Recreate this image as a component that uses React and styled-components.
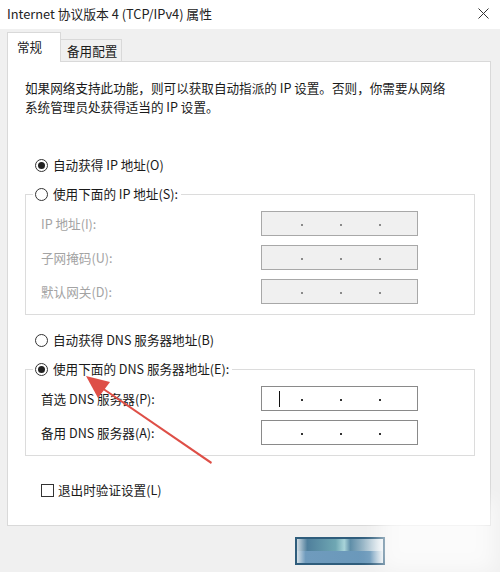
import React from "react";
import styled, { createGlobalStyle } from "styled-components";

const Global = createGlobalStyle`
  html, body { margin: 0; padding: 0; }
  body {
    background: #f0f0f0;
    font-family: "Noto Sans CJK SC", "Noto Sans", sans-serif;
    color: #1a1a1a;
    width: 500px;
    height: 572px;
    overflow: hidden;
  }
`;

const Window = styled.div`
  position: relative;
  width: 500px;
  height: 572px;
  background: #f0f0f0;
`;

const TitleBar = styled.div`
  height: 29px;
  background: #ffffff;
  display: flex;
  align-items: center;
  justify-content: space-between;
  padding: 0 11px 2px 7px;
  box-sizing: border-box;
  font-size: 12.8px;
  color: #222;
`;

const Body = styled.div`
  padding: 0 9px 0 7px;
`;

const TabRow = styled.div`
  display: flex;
  align-items: flex-end;
  height: 30px;
  margin-top: 3px;
  margin-bottom: -1px;
  position: relative;
  z-index: 1;
`;

const Tab = styled.div`
  box-sizing: border-box;
  height: ${(p) => (p.$active ? 30 : 23)}px;
  width: ${(p) => (p.$active ? 54 : 61)}px;
  padding-left: ${(p) => (p.$active ? 9 : 6)}px;
  padding-bottom: ${(p) => (p.$active ? 2 : 0)}px;
  display: flex;
  align-items: center;
  background: ${(p) => (p.$active ? "#ffffff" : "#f0f0f0")};
  border: 1px solid #d9d9d9;
  border-bottom: ${(p) => (p.$active ? "none" : "1px solid #d9d9d9")};
  ${(p) => (p.$active ? "" : "border-left: none;")}
  font-size: 12.6px;
  line-height: 19px;
`;

const Panel = styled.div`
  box-sizing: border-box;
  height: 465px;
  background: #ffffff;
  border: 1px solid #d9d9d9;
  padding-top: 16px;
  font-size: 12.6px;
`;

const Desc = styled.p`
  margin: 0 0 0 17px;
  line-height: 19px;
  width: 424px;
`;

const OptionRow = styled.label`
  display: flex;
  align-items: center;
  height: 20px;
  margin: ${(p) => p.$mt || 0}px 0 0 ${(p) => p.$ml || 27}px;
  gap: ${(p) => p.$gap || 5}px;
  line-height: 20px;
`;

const Radio = styled.span`
  box-sizing: border-box;
  width: 13px;
  height: 13px;
  border-radius: 50%;
  border: 1px solid #333;
  background: #fff;
  display: flex;
  align-items: center;
  justify-content: center;
  &::after {
    content: "";
    width: 7px;
    height: 7px;
    border-radius: 50%;
    background: ${(p) => (p.$checked ? "#222" : "transparent")};
  }
`;

const Check = styled.span`
  box-sizing: border-box;
  width: 13px;
  height: 13px;
  border: 1px solid #333;
  background: #fff;
`;

const Group = styled.fieldset`
  box-sizing: border-box;
  margin: 9px 15px 0 17px;
  padding: 7px 0 10px 15px;
  border: 1px solid #dcdcdc;
  min-width: 0;
`;

const Legend = styled.legend`
  padding: 0 3px 0 2px;
  margin-left: -8px;
  height: 20px;
  display: flex;
  align-items: center;
  gap: 5px;
  line-height: 20px;
`;

const Fields = styled.div`
  display: grid;
  grid-template-columns: 220px 157px;
  row-gap: 9px;
  align-items: center;
`;

const FieldLabel = styled.span`
  color: ${(p) => (p.$disabled ? "#a3a3a3" : "#1a1a1a")};
`;

const IpBox = styled.div`
  box-sizing: border-box;
  height: 25px;
  border: 1px solid ${(p) => (p.$disabled ? "#a8a8a8" : "#8a8a8a")};
  background: ${(p) => (p.$disabled ? "#f0f0f0" : "#ffffff")};
  display: flex;
  align-items: center;
  padding-left: 3px;
`;

const Octet = styled.span`
  width: 35px;
  height: 100%;
  display: flex;
  align-items: center;
  padding-left: ${(p) => (p.$caret ? 14 : 17)}px;
  box-sizing: border-box;
`;

const Dot = styled.span`
  width: 4px;
  display: flex;
  justify-content: center;
  &::after {
    content: "";
    width: 2px;
    height: 2px;
    margin-top: 2px;
    background: ${(p) => (p.$disabled ? "#8a8a8a" : "#333")};
  }
`;

const Caret = styled.span`
  width: 1px;
  height: 16px;
  background: #111;
`;

const Footer = styled.div`
  display: flex;
  justify-content: flex-end;
  padding-right: 106px;
  margin-top: 11px;
`;

const OkButton = styled.div`
  box-sizing: border-box;
  width: 90px;
  height: 28px;
  border: 2px solid #2f5d7c;
  background:
    linear-gradient(90deg, #cfdbe3 0%, #4f7f9c 12%, #6fa7b3 45%, #a9d4d9 55%, #5f8ea8 62%, #e8eef2 98%) top / 100% 50% no-repeat,
    linear-gradient(90deg, #d6e1e8 0%, #6f9bbd 10%, #6a98ba 85%, #e6ecf0 100%) bottom / 100% 50% no-repeat;
  filter: blur(0.6px);
`;

const Smudge = styled.div`
  position: absolute;
  left: 380px;
  top: 500px;
  width: 115px;
  height: 72px;
  background: rgba(255, 255, 255, 0.7);
  filter: blur(10px);
  pointer-events: none;
`;

const ArrowLayer = styled.svg`
  position: absolute;
  left: 0;
  top: 0;
  width: 500px;
  height: 572px;
  pointer-events: none;
`;

function IpField({ disabled, caret }) {
  return (
    <IpBox $disabled={disabled}>
      <Octet $caret={caret}>{caret && <Caret />}</Octet>
      <Dot $disabled={disabled} />
      <Octet />
      <Dot $disabled={disabled} />
      <Octet />
      <Dot $disabled={disabled} />
      <Octet />
    </IpBox>
  );
}

export default function App() {
  return (
    <Window>
      <Global />
      <TitleBar>
        <span>Internet 协议版本 4 (TCP/IPv4) 属性</span>
        <svg width="11" height="11" viewBox="0 0 11 11">
          <path d="M0.5 0.5 L10.5 10.5 M10.5 0.5 L0.5 10.5" stroke="#333" strokeWidth="1" fill="none" />
        </svg>
      </TitleBar>
      <Body>
        <TabRow>
          <Tab $active>常规</Tab>
          <Tab>备用配置</Tab>
        </TabRow>
        <Panel>
          <Desc>
            如果网络支持此功能，则可以获取自动指派的 IP 设置。否则，你需要从网络系统管理员处获得适当的 IP 设置。
          </Desc>
          <OptionRow $mt={39}>
            <Radio $checked />
            自动获得 IP 地址(O)
          </OptionRow>
          <Group>
            <Legend>
              <Radio />
              使用下面的 IP 地址(S):
            </Legend>
            <Fields>
              <FieldLabel $disabled>IP 地址(I):</FieldLabel>
              <IpField disabled />
              <FieldLabel $disabled>子网掩码(U):</FieldLabel>
              <IpField disabled />
              <FieldLabel $disabled>默认网关(D):</FieldLabel>
              <IpField disabled />
            </Fields>
          </Group>
          <OptionRow $mt={15}>
            <Radio />
            自动获得 DNS 服务器地址(B)
          </OptionRow>
          <Group>
            <Legend>
              <Radio $checked />
              使用下面的 DNS 服务器地址(E):
            </Legend>
            <Fields>
              <FieldLabel>首选 DNS 服务器(P):</FieldLabel>
              <IpField caret />
              <FieldLabel>备用 DNS 服务器(A):</FieldLabel>
              <IpField />
            </Fields>
          </Group>
          <OptionRow $mt={24} $ml={33} $gap={4}>
            <Check />
            退出时验证设置(L)
          </OptionRow>
        </Panel>
        <Footer>
          <OkButton aria-label="确定" />
        </Footer>
      </Body>
      <Smudge />
      <ArrowLayer viewBox="0 0 500 572">
        <polygon points="100,385.5 102.5,389.5 211,464 212,462" fill="#de4f47" />
        <polygon points="86,376 110,382 98,398" fill="#de4f47" />
      </ArrowLayer>
    </Window>
  );
}
